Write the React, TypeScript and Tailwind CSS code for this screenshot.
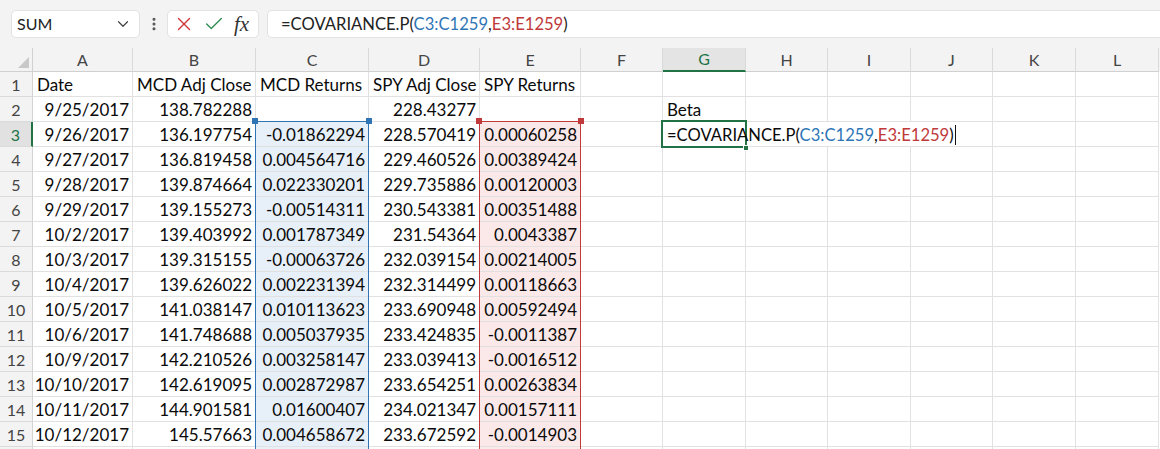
import { ChevronDown, EllipsisVertical, X, Check } from "lucide-react";

const cols = [
  { name: "A", w: "w-[100px]" },
  { name: "B", w: "w-[123px]" },
  { name: "C", w: "w-[113px]" },
  { name: "D", w: "w-[111px]" },
  { name: "E", w: "w-[101px]" },
  { name: "F", w: "w-[82px]" },
  { name: "G", w: "w-[83px]" },
  { name: "H", w: "w-[82px]" },
  { name: "I", w: "w-[83px]" },
  { name: "J", w: "w-[82px]" },
  { name: "K", w: "w-[83px]" },
  { name: "L", w: "w-[83px]" },
];

const data: string[][] = [
  ["9/25/2017", "138.782288", "", "228.43277", ""],
  ["9/26/2017", "136.197754", "-0.01862294", "228.570419", "0.00060258"],
  ["9/27/2017", "136.819458", "0.004564716", "229.460526", "0.00389424"],
  ["9/28/2017", "139.874664", "0.022330201", "229.735886", "0.00120003"],
  ["9/29/2017", "139.155273", "-0.00514311", "230.543381", "0.00351488"],
  ["10/2/2017", "139.403992", "0.001787349", "231.54364", "0.0043387"],
  ["10/3/2017", "139.315155", "-0.00063726", "232.039154", "0.00214005"],
  ["10/4/2017", "139.626022", "0.002231394", "232.314499", "0.00118663"],
  ["10/5/2017", "141.038147", "0.010113623", "233.690948", "0.00592494"],
  ["10/6/2017", "141.748688", "0.005037935", "233.424835", "-0.0011387"],
  ["10/9/2017", "142.210526", "0.003258147", "233.039413", "-0.0016512"],
  ["10/10/2017", "142.619095", "0.002872987", "233.654251", "0.00263834"],
  ["10/11/2017", "144.901581", "0.01600407", "234.021347", "0.00157111"],
  ["10/12/2017", "145.57663", "0.004658672", "233.672592", "-0.0014903"],
  ["", "", "", "", ""],
];

const headers = ["Date", "MCD Adj Close", "MCD Returns", "SPY Adj Close", "SPY Returns"];

function Cell({
  w,
  children,
  right,
  tint,
}: {
  w: string;
  children?: React.ReactNode;
  right?: boolean;
  tint?: string;
}) {
  return (
    <div
      className={`${w} ${tint ?? ""} h-[25px] shrink-0 border-r border-b border-[#e1e1e1] flex items-center pt-[2px] whitespace-nowrap overflow-hidden ${
        right ? "justify-end pr-[3px]" : "pl-[4px]"
      }`}
    >
      {children}
    </div>
  );
}

function RowHead({ n, active }: { n: number; active?: boolean }) {
  return (
    <div
      className={`w-[33px] h-[25px] shrink-0 border-b border-[#dadada] flex items-center justify-center pt-[1px] text-[16px] ${
        active
          ? "bg-[#e1e1e1] text-[#217346] border-r-2 border-r-[#217346]"
          : "bg-[#f3f3f3] text-[#444] border-r border-r-[#d4d4d4]"
      }`}
    >
      {n < 16 ? n : ""}
    </div>
  );
}

function Formula({ size }: { size: string }) {
  return (
    <span className={`${size} whitespace-nowrap relative z-10`}>
      =COVARIANCE.P(<span className="text-[#2f75b6]">C3:C1259</span>,
      <span className="text-[#c0393b]">E3:E1259</span>)
    </span>
  );
}

export default function App() {
  return (
    <div className="w-[1160px] h-[449px] overflow-hidden bg-white font-['Lato',sans-serif] text-[#0a0a0a]">
      {/* formula bar */}
      <div className="h-[48px] bg-[#f3f3f3] flex items-start pt-[10px] pl-[11px]">
        <div className="w-[129px] h-[28px] bg-white rounded-[5px] border border-[#e2e2e2] flex items-center justify-between pl-[5px] pr-[7px] text-[16px] text-[#222]">
          SUM
          <ChevronDown size={18} strokeWidth={1.6} className="text-[#444]" />
        </div>
        <div className="w-[27px] h-[28px] flex items-center justify-center">
          <EllipsisVertical size={16} strokeWidth={2.6} className="text-[#555]" />
        </div>
        <div className="w-[92px] h-[28px] bg-white rounded-[5px] border border-[#e2e2e2] flex items-center pl-[5px]">
          <X size={22} strokeWidth={1.5} className="text-[#d13438]" />
          <Check size={22} strokeWidth={1.5} className="text-[#2f8f55] ml-[8px]" />
          <span className="ml-[9px] font-['Liberation_Serif',serif] italic text-[21px] text-[#333] leading-none">
            fx
          </span>
        </div>
        <div className="ml-[8px] flex-1 h-[28px] bg-white rounded-l-[5px] border border-r-0 border-[#e2e2e2] flex items-center pl-[13px] text-[#222]">
          <Formula size="text-[16.6px]" />
        </div>
      </div>

      {/* grid */}
      <div className="relative">
        <div className="flex h-[24px] bg-[#f3f3f3] text-[16px] text-[#444]">
          <div className="w-[33px] shrink-0 border-r border-b border-[#d0d0d0] flex items-end justify-end pr-[3px] pb-[3px]">
            <svg width="11" height="11" viewBox="0 0 11 11">
              <polygon points="11,0 11,11 0,11" fill="#c8c8c8" />
            </svg>
          </div>
          {cols.map((c) =>
            c.name === "G" ? (
              <div
                key={c.name}
                className={`${c.w} shrink-0 border-r border-[#dadada] border-b-2 border-b-[#217346] bg-[#e4e4e4] text-[#217346] flex items-center justify-center`}
              >
                {c.name}
              </div>
            ) : (
              <div
                key={c.name}
                className={`${c.w} shrink-0 border-r border-[#dadada] border-b border-b-[#d0d0d0] flex items-center justify-center`}
              >
                {c.name}
              </div>
            )
          )}
        </div>

        {/* row 1 */}
        <div className="flex text-[17px]">
          <RowHead n={1} />
          {cols.map((c, i) => (
            <Cell key={c.name} w={c.w}>
              {headers[i] ?? ""}
            </Cell>
          ))}
        </div>

        {data.map((row, ri) => {
          const n = ri + 2;
          const tintC = n >= 3 ? "bg-[#e7eff8]" : "";
          const tintE = n >= 3 ? "bg-[#fbe8e8]" : "";
          return (
            <div key={n} className="flex text-[17px]">
              <RowHead n={n} active={n === 3} />
              <Cell w={cols[0].w} right>
                {row[0]}
              </Cell>
              <Cell w={cols[1].w} right>
                {row[1]}
              </Cell>
              <Cell w={cols[2].w} right tint={tintC}>
                {row[2]}
              </Cell>
              <Cell w={cols[3].w} right>
                {row[3]}
              </Cell>
              <Cell w={cols[4].w} right tint={tintE}>
                {row[4]}
              </Cell>
              <Cell w={cols[5].w} />
              {n === 3 ? (
                <div className="w-[330px] h-[25px] shrink-0 border-r border-b border-[#e1e1e1] flex items-center pl-[4px] pt-[2px] whitespace-nowrap">
                  <Formula size="text-[16.6px]" />
                  <span className="inline-block w-[1px] h-[20px] bg-[#111] ml-[1px]" />
                </div>
              ) : (
                <>
                  <Cell w={cols[6].w}>{n === 2 ? "Beta" : ""}</Cell>
                  <Cell w={cols[7].w} />
                  <Cell w={cols[8].w} />
                  <Cell w={cols[9].w} />
                </>
              )}
              <Cell w={cols[10].w} />
              <Cell w={cols[11].w} />
            </div>
          );
        })}

        {/* reference range highlights */}
        <div className="absolute left-[255px] top-[73px] w-[114px] h-[400px] border border-[#2f75b6] pointer-events-none" />
        <div className="absolute left-[252px] top-[70px] w-[6px] h-[6px] bg-[#2f75b6]" />
        <div className="absolute left-[366px] top-[70px] w-[6px] h-[6px] bg-[#2f75b6]" />

        <div className="absolute left-[479px] top-[73px] w-[102px] h-[400px] border border-[#c0393b] pointer-events-none" />
        <div className="absolute left-[476px] top-[70px] w-[6px] h-[6px] bg-[#c0393b]" />
        <div className="absolute left-[578px] top-[70px] w-[6px] h-[6px] bg-[#c0393b]" />

        {/* active cell */}
        <div className="absolute left-[661px] top-[72px] w-[86px] h-[28px] border-2 border-[#217346] pointer-events-none" />
        <div className="absolute left-[743px] top-[97px] w-[6px] h-[6px] bg-[#217346] border border-white" />
      </div>
    </div>
  );
}
